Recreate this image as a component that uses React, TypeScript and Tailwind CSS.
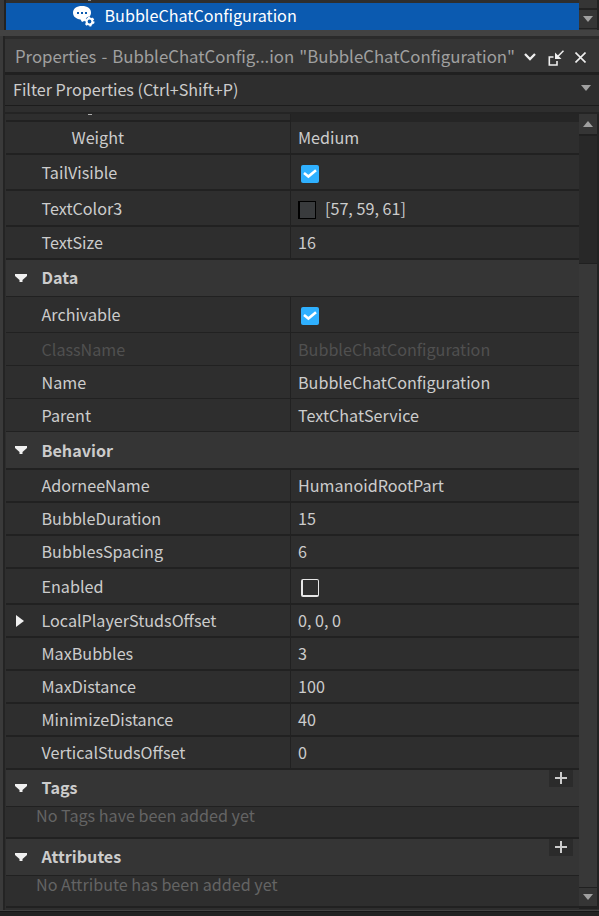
import React from 'react'
import type { ReactNode } from 'react'

// Define types for one line of the property grid
interface PropertyRow {
  name: string;
  value?: ReactNode;
  height: string;
  disabled?: boolean;
  indent?: boolean;
  expandable?: boolean;
}

interface HeaderProps {
  title: string;
  border?: string;
  addable?: boolean;
}

const Check = () => (
  <svg className="mt-[4px] ml-[3px] block" width="18" height="18" viewBox="0 0 18 18">
    <rect width="18" height="18" rx="2" fill="#2fb0ff" />
    <path d="M3 8 7.400 11.500 15 5.200" fill="none" stroke="#fff" strokeWidth="2.600" />
  </svg>
)

const EmptyCheck = () => (
  <div className="ml-[3px] mt-[4px] h-[18px] w-[18px] rounded-[2px] border border-b-2 border-l-2 border-[#e6e6e6]" />
)

const ColorValue = () => (
  <div className="flex items-center">
    <div className="mt-[4px] mr-[9px] h-[18px] w-[18px] border border-l-2 border-black bg-[#393b3d]" />
    <span>[57, 59, 61]</span>
  </div>
)

const upperRows: PropertyRow[] = [
  { name: 'Weight', value: 'Medium', height: 'h-[33px] border-b-2', indent: true },
  { name: 'TailVisible', value: <Check />, height: 'h-[36px] border-b-2' },
  { name: 'TextColor3', value: <ColorValue />, height: 'h-[36px] border-b-2' },
  { name: 'TextSize', value: '16', height: 'h-[33px] border-b-2' },
]

const dataRows: PropertyRow[] = [
  { name: 'Archivable', value: <Check />, height: 'h-[36px] border-b' },
  { name: 'ClassName', value: 'BubbleChatConfiguration', height: 'h-[33px] border-b', disabled: true },
  { name: 'Name', value: 'BubbleChatConfiguration', height: 'h-[33px] border-b' },
  { name: 'Parent', value: 'TextChatService', height: 'h-[33px] border-b' },
]

const behaviorRows: PropertyRow[] = [
  { name: 'AdorneeName', value: 'HumanoidRootPart', height: 'h-[33px] border-b-2' },
  { name: 'BubbleDuration', value: '15', height: 'h-[33px] border-b-2' },
  { name: 'BubblesSpacing', value: '6', height: 'h-[33px] border-b-2' },
  { name: 'Enabled', value: <EmptyCheck />, height: 'h-[36px] border-b-2' },
  { name: 'LocalPlayerStudsOffset', value: '0, 0, 0', height: 'h-[33px] border-b-2', expandable: true },
  { name: 'MaxBubbles', value: '3', height: 'h-[33px] border-b-2' },
  { name: 'MaxDistance', value: '100', height: 'h-[33px] border-b-2' },
  { name: 'MinimizeDistance', value: '40', height: 'h-[33px] border-b-2' },
  { name: 'VerticalStudsOffset', value: '0', height: 'h-[33px] border-b-2' },
]

// Rows with an odd inner height keep their text on the upper half pixel
const Row = ({ name, value, height, disabled, indent, expandable }: PropertyRow) => {
  const odd = height === 'h-[33px] border-b-2' || height === 'h-[36px] border-b'
  return (
    <div className={`flex shrink-0 border-[#212121] ${height} ${disabled ? 'text-[#505050]' : 'text-[#cccccc]'}`}>
      <div className={`flex w-[285px] shrink-0 items-center border-r border-[#212121] ${odd ? 'pb-px' : ''} ${indent ? 'pl-[65.500px]' : 'pl-[9px]'}`}>
        {!indent && (
          <div className="w-[26.500px]">
            {expandable && (
              <svg className="mt-px ml-px" width="8" height="12" viewBox="0 0 8 12">
                <path d="M0 0 8 6 0 12z" fill="#f0f0f0" />
              </svg>
            )}
          </div>
        )}
        <span>{name}</span>
      </div>
      <div className={`flex flex-1 items-center pl-[7px] ${odd ? 'pb-px' : ''}`}>{value}</div>
    </div>
  )
}

const SectionHeader = ({ title, border = 'h-[37px] border-b', addable }: HeaderProps) => (
  <div className={`flex shrink-0 items-center border-[#212121] bg-[#353535] pl-[9px] font-bold text-[#cccccc] ${border}`}>
    <svg className="mr-[14.500px]" width="12" height="8" viewBox="0 0 12 8">
      <path d="M0 0h12v2L7.500 6v2h-3V6L0 2z" fill="#f0f0f0" />
    </svg>
    <span className={`flex-1 ${title === 'Behavior' ? '' : 'pb-[2px]'}`}>{title}</span>
    {addable && (
      <div className="mr-[6px] flex h-[17px] w-6 justify-center self-start bg-[#2b2b2b]">
        <svg className="mt-[2px]" width="12" height="12" viewBox="0 0 12 12">
          <path d="M0 6h12M6 0v12" stroke="#cccccc" strokeWidth="2" />
        </svg>
      </div>
    )}
  </div>
)

const Arrow = ({ up = false }: { up?: boolean }) => (
  <svg width="10" height="6" viewBox="0 0 10 6">
    <path d={up ? 'M0 6h10L5 0z' : 'M0 0h10L5 6z'} fill="#a0a0a0" />
  </svg>
)

const App = () => {
  return (
    <div className="flex h-[916px] w-[599px] flex-col overflow-hidden bg-[#2e2e2e] font-['Noto_Sans_CJK_SC','Noto_Sans',sans-serif] text-[16.150px] leading-[22px] whitespace-nowrap">
      {/* Explorer tree, last visible item */}
      <div className="flex h-[30px] shrink-0 border-l-4 border-[#3a3a3a]">
        <div className="flex flex-1 flex-col border-l-2 border-[#222222]">
          <div className="h-[3px] shrink-0">
            <div className="ml-[82px] h-px w-[3px] bg-[#909090]" />
          </div>
          <div className="flex flex-1 items-center bg-[#0b5ab0] pb-[3px] pl-[67px] text-white">
            <svg className="mt-[3px] mr-[9.500px]" width="22" height="21" viewBox="0 0 22 21">
              <path d="M9 0c5.500 0 9 2.600 9 6.500 0 1.600-.4 2.800-1.200 3.800-2.200.2-4.300 2-4.500 4.300L9 16l-1.500-2.600C3 13.100 0 10.500 0 6.800 0 2.700 3.600 0 9 0z" fill="#fff" />
              <path d="M4 6h2v2H4zM8 6h2v2H8zM12 6h2v2h-2z" fill="#0b5ab0" />
              <circle cx="16.500" cy="15.500" r="2.900" fill="none" stroke="#fff" strokeWidth="2" />
              <circle cx="16.500" cy="15.500" r="4.300" fill="none" stroke="#fff" strokeWidth="1.500" strokeDasharray="2.250 2.250" />
            </svg>
            <span>BubbleChatConfiguration</span>
          </div>
        </div>
        <div className="flex w-5 flex-col border-r-2 border-[#222222] bg-[#353535]">
          <div className="h-[10px] shrink-0 border-b-2 border-[#222222]" />
          <div className="flex h-[19px] items-center justify-center border-b border-[#222222]">
            <Arrow />
          </div>
        </div>
      </div>
      <div className="h-[6px] shrink-0 bg-[#424242]" />

      {/* Properties window */}
      <div className="flex h-[874px] shrink-0 border-l-[3px] border-[#3a3a3a]">
        <div className="flex flex-1 flex-col border-l-2 border-[#242424]">
          <div className="flex h-[39px] shrink-0 items-center border-t-3 border-b-3 border-t-[#2b2b2b] border-b-[#202020] bg-[#353535] pt-px pl-[10px] text-[#a0a0a0]">
            <span className="w-[509px] text-[16.800px] [word-spacing:1.200px]">Properties - BubbleChatConfig...ion "BubbleChatConfiguration"</span>
            <svg className="mt-[2px]" width="12" height="8" viewBox="0 0 12 8">
              <path d="m1 1 5 5 5-5" fill="none" stroke="#eeeeee" strokeWidth="2.300" />
            </svg>
            <svg className="mt-[3px] ml-[12px]" width="16" height="16" viewBox="0 0 16 16">
              <path d="M5.500 7H1.300v8h7.700v-4" fill="none" stroke="#eeeeee" strokeWidth="1.600" />
              <path d="M15.500.7 10 6.200" stroke="#eeeeee" strokeWidth="1.600" />
              <path d="M7 2.500V9h6.500z" fill="#eeeeee" />
            </svg>
            <svg className="mt-[3px] ml-[11px]" width="11" height="11" viewBox="0 0 11 11">
              <path d="m.5.5 10 10m0-10-10 10" stroke="#eeeeee" strokeWidth="1.600" />
            </svg>
          </div>
          <div className="flex h-[31px] shrink-0 items-center justify-between border-b border-[#1c1c1c] pr-2 pb-[2px] pl-2 text-[#cccccc]">
            <span>Filter Properties (Ctrl+Shift+P)</span>
            <div className="pb-[3px]">
              <svg width="10" height="6" viewBox="0 0 10 6">
                <path d="M0 0h10L5 6z" fill="#a0a0a0" />
              </svg>
            </div>
          </div>
          <div className="h-[8px] shrink-0 border-b-2 border-[#242424]" />

          <div className="flex h-[795px] shrink-0">
            <div className="flex w-[574px] flex-col pl-px">
              {/* Tail of the row that is scrolled out of view */}
              <div className="flex h-[8px] shrink-0 border-b-2 border-[#212121]">
                <div className="w-[285px] overflow-hidden border-r border-[#212121]">
                  <div className="ml-[82px] h-px w-1 bg-[#b0b0b0]" />
                </div>
                <div className="h-[8px] flex-1 bg-[#252525]" />
              </div>
              {upperRows.map((row) => <Row key={row.name} {...row} />)}
              <SectionHeader title="Data" />
              {dataRows.map((row) => <Row key={row.name} {...row} />)}
              <SectionHeader title="Behavior" border="h-[38px] border-b-2" />
              {behaviorRows.map((row) => <Row key={row.name} {...row} />)}
              <SectionHeader title="Tags" addable />
              <div className="h-8 shrink-0 border-b-2 border-[#212121] pl-[30px] leading-4 text-[#646464]">No Tags have been added yet</div>
              <SectionHeader title="Attributes" addable />
              <div className="h-8 shrink-0 border-b-2 border-[#212121] pl-[30px] leading-4 text-[#646464]">No Attribute has been added yet</div>
            </div>

            {/* Scrollbar */}
            <div className="flex w-[20px] flex-col border-r-2 border-[#222222] bg-[#282828]">
              <div className="flex h-[22px] shrink-0 items-center justify-center border-b-2 border-[#202020] bg-[#353535]">
                <Arrow up />
              </div>
              <div className="h-[128px] shrink-0 border-b border-[#202020]" />
              <div className="flex-1 border-b border-[#202020] bg-[#383838]" />
              <div className="flex h-[21px] shrink-0 items-center justify-center border-b-3 border-[#202020] bg-[#353535]">
                <Arrow />
              </div>
            </div>
          </div>
        </div>
      </div>
      <div className="h-px shrink-0 bg-[#424242]" />
      <div className="flex-1 border-t border-[#161616] bg-[#222222]" />
    </div>
  )
}

export default App
